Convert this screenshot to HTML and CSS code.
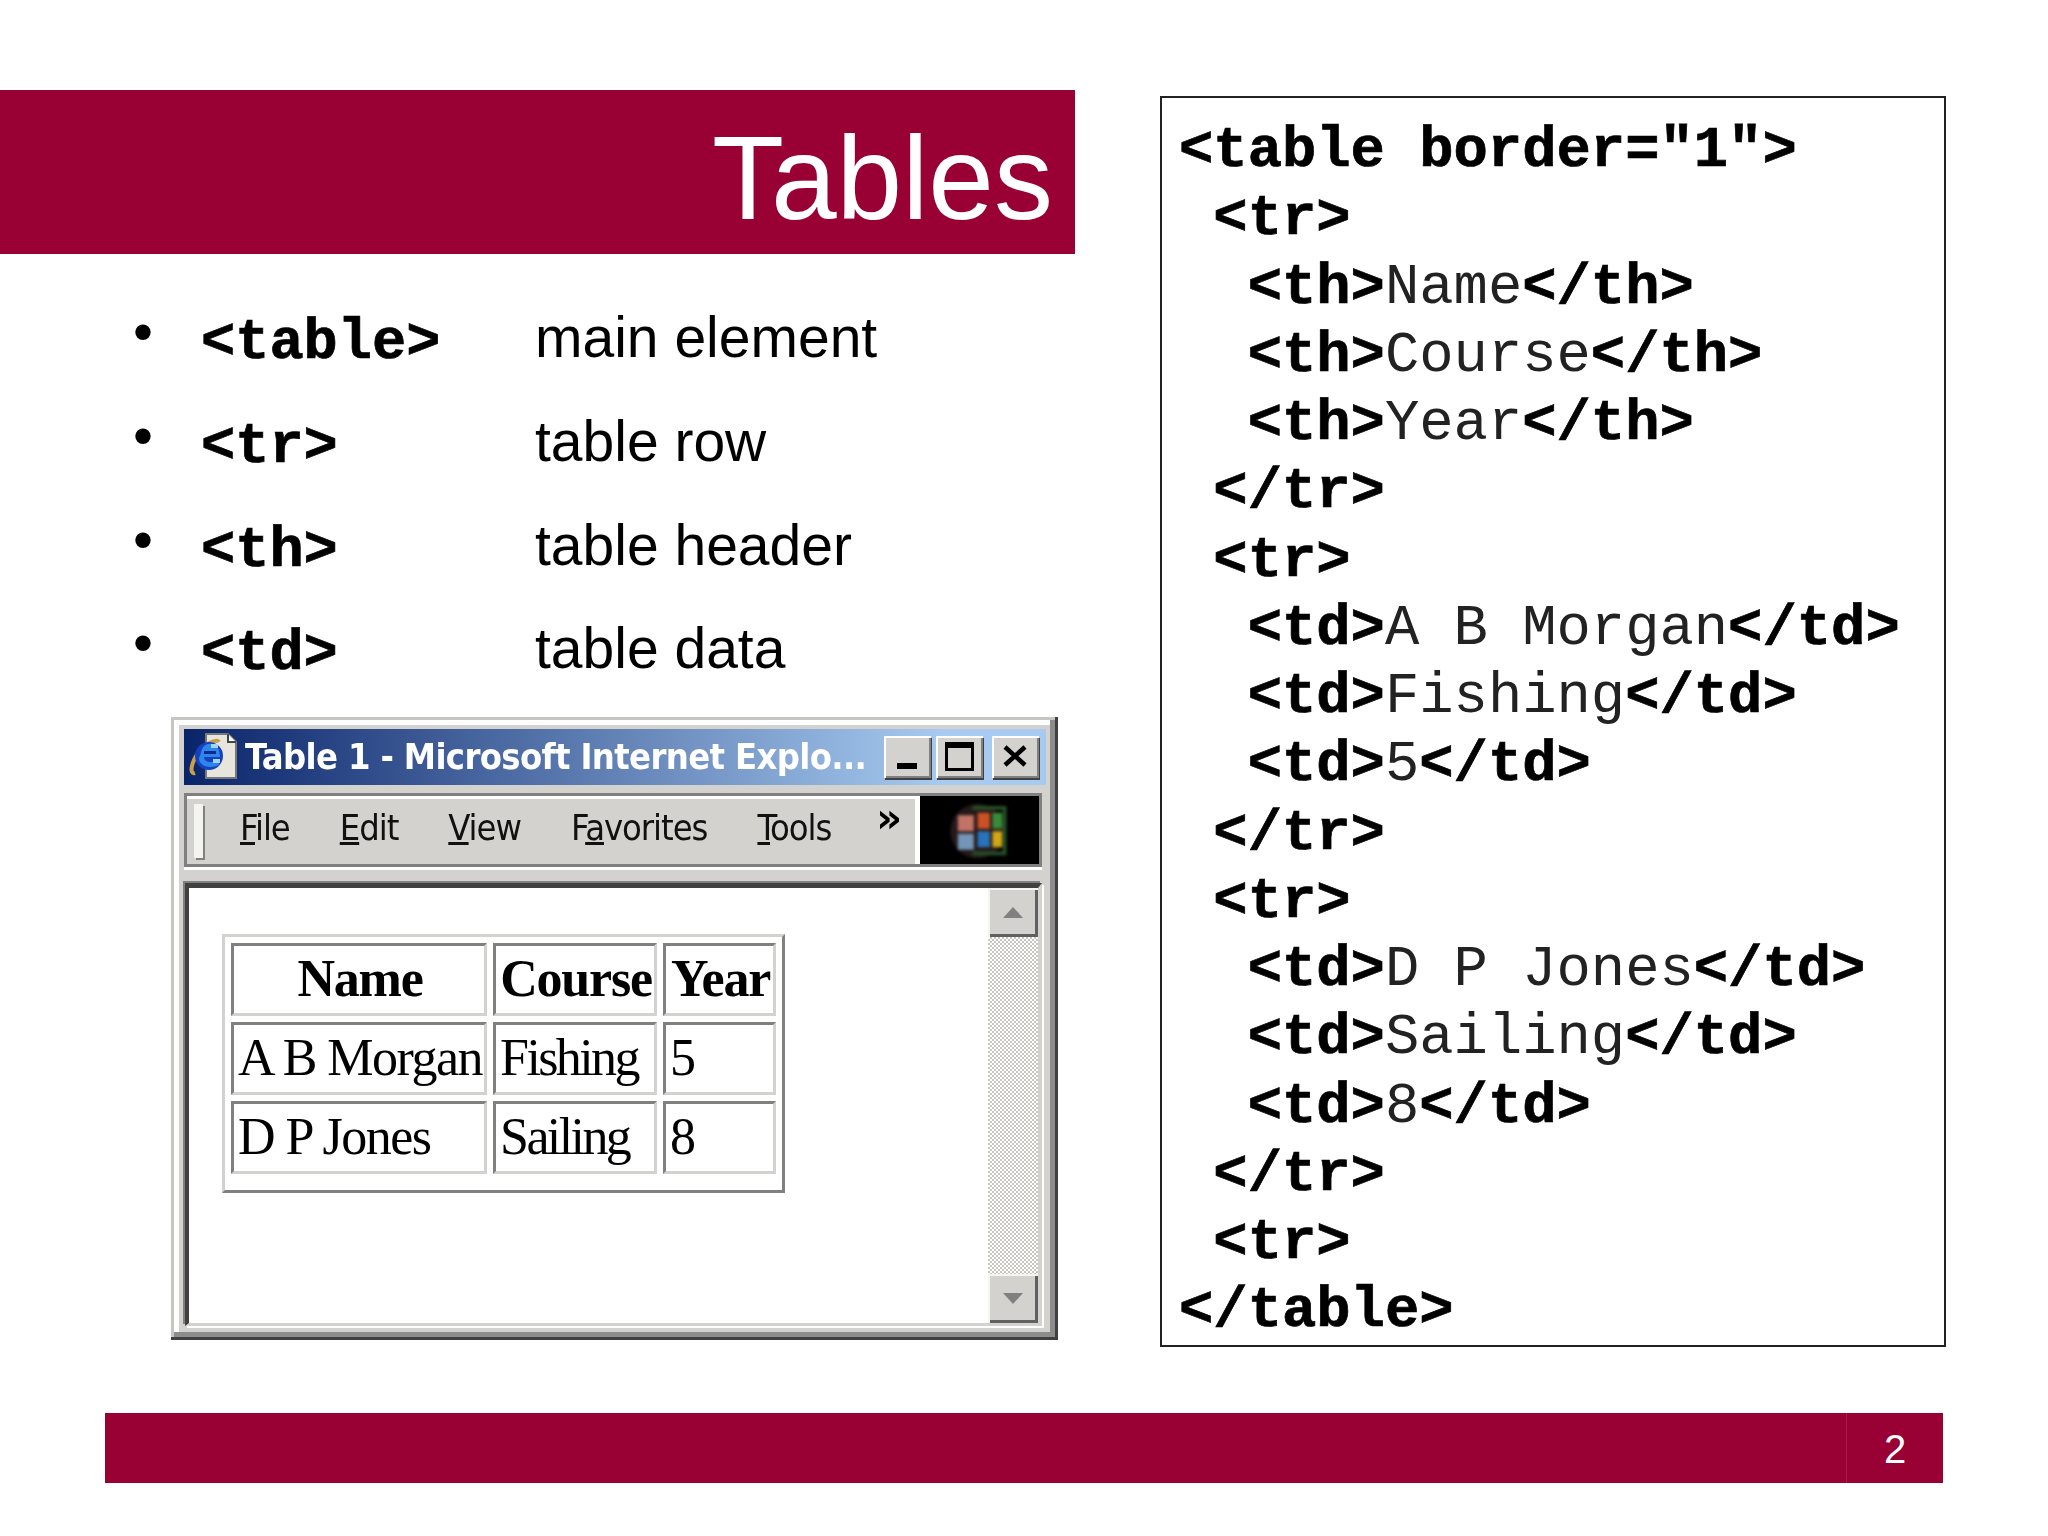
FILE: index.html
```html
<!DOCTYPE html>
<html lang="en">
<head>
<meta charset="utf-8">
<title>Tables</title>
<link rel="stylesheet" href="styles.css">
</head>
<body>
<div class="slide">
  <div class="main">
    <section class="left">
      <h1 class="title">Tables</h1>
      <ul class="terms">
        <li class="term"><span class="bullet">•</span><code class="tag">&lt;table&gt;</code><span class="desc">main element</span></li>
        <li class="term"><span class="bullet">•</span><code class="tag">&lt;tr&gt;</code><span class="desc">table row</span></li>
        <li class="term"><span class="bullet">•</span><code class="tag">&lt;th&gt;</code><span class="desc">table header</span></li>
        <li class="term"><span class="bullet">•</span><code class="tag">&lt;td&gt;</code><span class="desc">table data</span></li>
      </ul>
      <div class="win">
        <div class="titlebar">
          <svg class="ie" viewBox="0 0 50 50" aria-hidden="true">
            <path d="M17 2H39L47 10V46H17Z" fill="#e8e6dc" stroke="#77787a" stroke-width="2"/>
            <path d="M39 2V10H47" fill="#fff" stroke="#444" stroke-width="2"/>
            <path d="M6 41C0 43 2 30 10 20C18 10 28 7 30 10" fill="none" stroke="#c9a04a" stroke-width="4"/>
            <circle cx="20" cy="24" r="14" fill="#1540c0"/>
            <path d="M12 21C13 14 18 11 23 12C28 13 31 17 31 25H15C15 30 22 32 29 28L30 33C22 37 10 35 10 26Z" fill="#2f86ea"/>
            <path d="M15 19H27V22H15Z" fill="#0a2a90"/>
            <path d="M22 12H29V16H22ZM24 27H31V31H24Z" fill="#9fd4ff"/>
          </svg>
          <span class="wintitle">Table 1 - Microsoft Internet Explo...</span>
          <span class="winbtns">
            <span class="winbtn"><span class="glyph-min"></span></span>
            <span class="winbtn"><span class="glyph-max"></span></span>
            <span class="winbtn winbtn-close">
              <svg class="glyph-x" viewBox="0 0 24 20" aria-hidden="true"><path d="M2 1L22 19M22 1L2 19" stroke="#000" stroke-width="4.5" fill="none"/></svg>
            </span>
          </span>
        </div>
        <div class="toolbar">
          <span class="grip"></span>
          <nav class="menu">
            <span><u>F</u>ile</span>
            <span><u>E</u>dit</span>
            <span><u>V</u>iew</span>
            <span>F<u>a</u>vorites</span>
            <span><u>T</u>ools</span>
          </nav>
          <span class="more">»</span>
          <span class="throbber">
            <svg class="flag" viewBox="0 0 60 50" aria-hidden="true">
              <circle cx="28" cy="26" r="22" fill="#3b2a2a" opacity=".7"/>
              <path d="M24 7H50V44H24" fill="none" stroke="#2c5a2c" stroke-width="3"/>
              <rect x="12" y="13" width="13" height="13" fill="#d98070"/>
              <rect x="12" y="28" width="13" height="13" fill="#7fa6cc"/>
              <rect x="28" y="11" width="10" height="13" fill="#e25a2a"/>
              <rect x="40" y="11" width="8" height="13" fill="#3f9a3f"/>
              <rect x="28" y="26" width="10" height="13" fill="#2f7fcf"/>
              <rect x="40" y="26" width="8" height="13" fill="#e8b818"/>
            </svg>
          </span>
        </div>
        <div class="viewport">
          <div class="page">
            <table class="demo">
              <tr class="row-head"><th class="c1">Name</th><th class="c2">Course</th><th class="c3">Year</th></tr>
              <tr><td class="c1">A B Morgan</td><td class="c2">Fishing</td><td class="c3">5</td></tr>
              <tr><td class="c1">D P Jones</td><td class="c2">Sailing</td><td class="c3">8</td></tr>
            </table>
          </div>
          <div class="scroll">
            <span class="sbtn"><span class="arrow-up"></span></span>
            <span class="track"></span>
            <span class="sbtn"><span class="arrow-down"></span></span>
          </div>
        </div>
      </div>
    </section>
    <pre class="code"><b>&lt;table border="1"&gt;</b>
 <b>&lt;tr&gt;</b>
  <b>&lt;th&gt;</b>Name<b>&lt;/th&gt;</b>
  <b>&lt;th&gt;</b>Course<b>&lt;/th&gt;</b>
  <b>&lt;th&gt;</b>Year<b>&lt;/th&gt;</b>
 <b>&lt;/tr&gt;</b>
 <b>&lt;tr&gt;</b>
  <b>&lt;td&gt;</b>A B Morgan<b>&lt;/td&gt;</b>
  <b>&lt;td&gt;</b>Fishing<b>&lt;/td&gt;</b>
  <b>&lt;td&gt;</b>5<b>&lt;/td&gt;</b>
 <b>&lt;/tr&gt;</b>
 <b>&lt;tr&gt;</b>
  <b>&lt;td&gt;</b>D P Jones<b>&lt;/td&gt;</b>
  <b>&lt;td&gt;</b>Sailing<b>&lt;/td&gt;</b>
  <b>&lt;td&gt;</b>8<b>&lt;/td&gt;</b>
 <b>&lt;/tr&gt;</b>
 <b>&lt;tr&gt;</b>
<b>&lt;/table&gt;</b></pre>
  </div>
  <footer class="footer"><span class="pageno">2</span></footer>
</div>
</body>
</html>
```

FILE: styles.css
```css
* { box-sizing: border-box; }
html, body { margin: 0; padding: 0; background: #fff; }
.slide { width: 2048px; height: 1536px; font-family: "Liberation Sans", Arial, sans-serif; color: #000; overflow: hidden; }
.main { display: flex; align-items: flex-start; height: 1347px; }

.left { width: 1075px; margin-top: 90px; flex: none; }
.title { margin: 0; height: 164px; background: #990033; color: #fff; font-weight: 400; font-size: 118px; line-height: 176px; text-align: right; padding-right: 22px; }

.terms { list-style: none; margin: 32px 0 0; padding: 0 0 0 132px; }
.term { display: flex; align-items: center; height: 103.7px; }
.bullet { width: 69px; font-size: 57px; line-height: 1; position: relative; top: -6px; left: 1px; }
.tag { width: 334px; font: 700 57px/1 "Liberation Mono", "Courier New", monospace; position: relative; top: 6px; -webkit-text-stroke: .7px #000; }
.desc { font-size: 57px; line-height: 1; }

.win { width: 887px; height: 623px; margin: 16px 0 0 171px; padding: 12px 12px 13px 13px; background: #d4d2ce; display: flex; flex-direction: column; box-shadow: inset -3px -3px 0 #404040, inset 3px 3px 0 #c8c6c2, inset -8px -8px 0 #8c8c8c, inset 8px 8px 0 #fff; filter: blur(.6px); }
.titlebar { height: 56px; flex: none; display: flex; align-items: center; background: linear-gradient(90deg, #0a246a, #a6caf0 88%); padding-left: 7px; position: relative; }
.ie { width: 50px; height: 50px; flex: none; margin-left: -2px; }
.wintitle { margin-left: 6px; color: #fff; font: 700 36px/1 "DejaVu Sans Condensed", "DejaVu Sans", sans-serif; letter-spacing: -.65px; white-space: nowrap; }
.winbtns { margin-left: auto; display: flex; padding-right: 7px; }
.winbtn { width: 47px; height: 42px; margin-left: 5px; background: #d4d2ce; position: relative; display: block; box-shadow: inset 2px 2px 0 #fff, inset -2px -2px 0 #808080, 1px 2px 0 #404040; }
.winbtn-close { margin-left: 9px; }
.glyph-min { position: absolute; left: 13px; bottom: 9px; width: 20px; height: 6px; background: #000; }
.glyph-max { position: absolute; left: 9px; top: 6px; width: 29px; height: 29px; border: 3px solid #000; border-top-width: 6px; }
.glyph-x { position: absolute; left: 11px; top: 9px; width: 24px; height: 22px; }

.toolbar { height: 74px; margin: 8px 4px 0 0; flex: none; display: flex; align-items: stretch; border: 3px solid #808080; box-shadow: inset 0 3px 0 #fff, 0 3px 0 #fff; padding-left: 7px; position: relative; }
.grip { width: 9px; margin: 8px 0 6px; flex: none; background: #f4f4f0; box-shadow: 2px 2px 0 #808080; }
.menu { display: flex; gap: 50px; margin-left: 37px; font: 400 36px/1 "DejaVu Sans Condensed", "DejaVu Sans", sans-serif; letter-spacing: -1.05px; padding-top: 14px; color: #111; }
.more { margin-left: 45px; font: 700 40px/1 "DejaVu Sans", sans-serif; padding-top: 2px; }
.throbber { margin-left: auto; width: 124px; flex: none; background: #000; border-left: 5px solid #fff; display: flex; align-items: center; justify-content: center; }
.flag { width: 74px; height: 62px; filter: blur(1.4px); opacity: .9; }

.viewport { height: 443px; margin: 16px 4px 0 1px; flex: none; display: flex; background: #fff; border-style: solid; border-width: 5px 4px 3px 4px; border-color: #404040 #d4d2ce #d4d2ce #404040; box-shadow: -2px -2px 0 #808080, 2px 2px 0 #fff; }
.page { flex: 1; padding: 46px 0 0 33px; }
.demo { border-collapse: separate; border-spacing: 6px; padding: 0 0 10px; border-style: solid; border-width: 3px; border-color: #d4d2ce #808080 #808080 #d4d2ce; font-family: "Liberation Serif", "Times New Roman", serif; color: #000; }
.demo th, .demo td { height: 73px; padding: 0 2px 0 4px; border-style: solid; border-width: 3px; border-color: #808080 #d4d2ce #d4d2ce #808080; font-size: 52px; line-height: 1; letter-spacing: -1.5px; white-space: nowrap; text-align: left; }
.demo th { text-align: center; letter-spacing: -1.2px; }
.demo td.c2 { letter-spacing: -2.6px; }
.demo .c1 { width: 254px; }
.demo .c2 { width: 164px; }
.demo .c3 { width: 113px; }
.scroll { width: 50px; flex: none; display: flex; flex-direction: column; }
.sbtn { height: 49px; flex: none; background: #d4d2ce; display: flex; align-items: center; justify-content: center; box-shadow: inset 2px 2px 0 #f4f4f0, inset -3px -3px 0 #606060; }
.track { flex: 1; background: repeating-conic-gradient(#c8c6c0 0 25%, #fff 0 50%) 0 0 / 4px 4px; }
.arrow-up, .arrow-down { width: 0; height: 0; border-left: 10px solid transparent; border-right: 10px solid transparent; }
.arrow-up { border-bottom: 11px solid #808080; }
.arrow-down { border-top: 11px solid #808080; }

.code { width: 786px; height: 1251px; margin: 96px 0 0 85px; flex: none; padding: 19px 0 0 17px; border: 2px solid #222; font: 400 57.2px/68.25px "Liberation Mono", "Courier New", monospace; color: #222; }
.code b { font-weight: 700; color: #000; -webkit-text-stroke: .7px #000; }

.footer { width: 1838px; height: 70px; margin: 66px 0 0 105px; background: #990033; display: flex; justify-content: flex-end; }
.pageno { width: 97px; border-left: 1px solid #a8194a; color: #fff; font-size: 40px; line-height: 72px; padding-left: 37px; }
```
